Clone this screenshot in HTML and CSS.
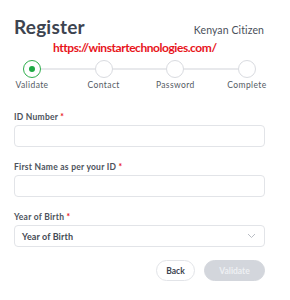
FILE: index.html
```html
<!DOCTYPE html>
<html>
<head>
<meta charset="utf-8">
<link rel="stylesheet" href="styles.css">
</head>
<body>
<div class="page">
  <div class="header">
    <h1 class="title">Register</h1>
    <span class="type">Kenyan Citizen</span>
  </div>
  <div class="url">https://winstartechnologies.com/</div>
  <div class="stepper">
    <div class="step active"><span class="circle"><span class="dot"></span></span><span class="label">Validate</span></div>
    <div class="step"><span class="circle"></span><span class="label">Contact</span></div>
    <div class="step"><span class="circle"></span><span class="label">Password</span></div>
    <div class="step"><span class="circle"></span><span class="label">Complete</span></div>
  </div>
  <div class="field first">
    <label class="flabel">ID Number <span class="req">*</span></label>
    <div class="input"></div>
  </div>
  <div class="field">
    <label class="flabel">First Name as per your ID <span class="req">*</span></label>
    <div class="input"></div>
  </div>
  <div class="field">
    <label class="flabel">Year of Birth <span class="req">*</span></label>
    <div class="input select"><span class="placeholder">Year of Birth</span>
      <svg class="chev" width="9" height="6" viewBox="0 0 9 6"><path d="M1 1 L4.5 4.5 L8 1" fill="none" stroke="#b9bdc4" stroke-width="1"/></svg>
    </div>
  </div>
  <div class="actions">
    <button class="btn back">Back</button>
    <button class="btn validate">Validate</button>
  </div>
</div>
</body>
</html>
```
FILE: styles.css
```css
* { box-sizing: border-box; }
body { margin: 0; background: #fff; font-family: "Lato", "Open Sans", sans-serif; color: #3f4550; }
.page { width: 290px; padding: 16px 25px 0 14px; }
.header { display: flex; justify-content: space-between; align-items: baseline; height: 22px; }
.title { margin: 0; font-size: 19px; font-weight: 700; color: #3d4450; line-height: 22px; letter-spacing: 0.2px; }
.type { font-size: 10.5px; color: #4a505a; margin-right: 1px; letter-spacing: 0.1px; }
.url { margin-top: 2px; padding-left: 39px; color: #e8141b; font-weight: 700; font-size: 12px; line-height: 16px; height: 16px; letter-spacing: -0.45px; }
.stepper { position: relative; display: flex; justify-content: space-between; margin-top: 4px; height: 36px; }
.stepper::before { content: ""; position: absolute; left: 18px; right: 18px; top: 8px; height: 1.5px; background: #e8e9ec; }
.step { position: relative; width: 36px; display: flex; flex-direction: column; align-items: center; }
.circle { width: 18px; height: 18px; border-radius: 50%; border: 1.5px solid #d9dbe0; background: #fff; display: flex; align-items: center; justify-content: center; }
.active .circle { border-color: #2fae4c; }
.dot { width: 6px; height: 6px; border-radius: 50%; background: #1ea944; }
.label { margin-top: 2px; font-size: 8.5px; line-height: 10px; color: #545a63; white-space: nowrap; letter-spacing: 0.4px; }
.field { margin-top: 15px; }
.field.first { margin-top: 16px; }
.flabel { display: block; font-size: 8.5px; font-weight: 700; color: #4c525b; line-height: 10px; margin-bottom: 3px; letter-spacing: 0.25px; }
.req { color: #e8141b; }
.input { height: 22px; border: 1px solid #e2e4e8; border-radius: 4px; background: #fff; }
.select { display: flex; align-items: center; justify-content: space-between; padding: 0 8px 0 7px; }
.placeholder { font-size: 9px; font-weight: 700; color: #444a54; letter-spacing: 0.1px; }
.actions { display: flex; justify-content: flex-end; gap: 9px; margin-top: 13px; }
.btn { font-family: inherit; font-size: 8.5px; font-weight: 700; height: 21px; border-radius: 11px; border: 1px solid #e2e4e8; background: #fff; color: #3d4450; padding: 0; }
.back { width: 39px; }
.validate { width: 61px; background: #d3d6dc; border-color: #d3d6dc; color: #eef0f3; }
```
